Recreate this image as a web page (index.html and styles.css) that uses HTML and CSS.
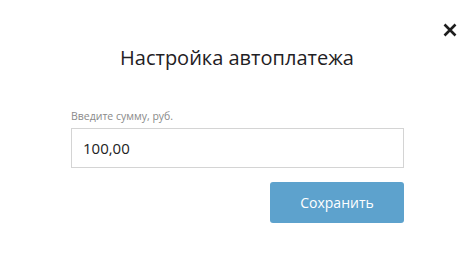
FILE: index.html
```html
<!DOCTYPE html>
<html lang="ru">
<head>
<meta charset="utf-8">
<link rel="stylesheet" href="styles.css">
</head>
<body>
<div class="modal">
  <button class="close" aria-label="Закрыть">
    <svg width="14" height="14" viewBox="0 0 14 14"><path d="M1.5 1.5L12.5 12.5M12.5 1.5L1.5 12.5" stroke="#1e1e1e" stroke-width="2.6" stroke-linecap="butt"/></svg>
  </button>
  <h1 class="title">Настройка автоплатежа</h1>
  <form class="form">
    <label class="label">Введите сумму, руб.</label>
    <div class="input">100,00</div>
    <div class="actions">
      <button type="button" class="save">Сохранить</button>
    </div>
  </form>
</div>
</body>
</html>
```
FILE: styles.css
```css
html, body {
  margin: 0;
  padding: 0;
  background: #fff;
}
body {
  width: 474px;
  height: 266px;
  font-family: "Open Sans", "Liberation Sans", sans-serif;
}
.modal {
  position: relative;
  padding-top: 43px;
}
.close {
  position: absolute;
  top: 22px;
  left: 442px;
  width: 16px;
  height: 16px;
  padding: 0;
  border: 0;
  background: none;
  display: flex;
  align-items: center;
  justify-content: center;
}
.title {
  margin: 0;
  text-align: center;
  font-size: 20px;
  font-weight: 400;
  line-height: 30px;
  color: #1f2124;
}
.form {
  margin: 36px 0 0 71px;
  width: 333px;
  display: flex;
  flex-direction: column;
}
.label {
  font-size: 10.5px;
  line-height: 14px;
  color: #8a8a8a;
}
.input {
  margin-top: 5px;
  box-sizing: border-box;
  height: 40px;
  border: 1px solid #d4d4d4;
  padding: 0 11px;
  display: flex;
  align-items: center;
  font-size: 15px;
  color: #222;
}
.actions {
  margin-top: 14px;
  display: flex;
  justify-content: flex-end;
}
.save {
  width: 134px;
  height: 41px;
  border: 0;
  border-radius: 3px;
  background: #5da2cd;
  color: #fff;
  font-family: inherit;
  font-size: 14px;
}
```
